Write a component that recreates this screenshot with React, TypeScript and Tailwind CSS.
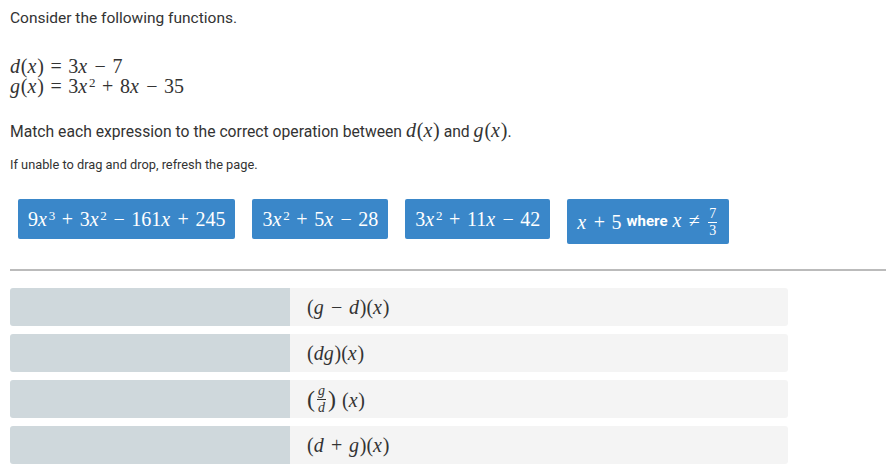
import React from 'react';

const ui = { fontFamily: 'Roboto, "Liberation Sans", sans-serif' };
const mathFont = { fontFamily: '"Liberation Serif", "DejaVu Serif", serif' };

// italic variable
function V({ children }: { children: React.ReactNode }) {
  return <span className="italic pr-[0.04em]">{children}</span>;
}

function Op({ children }: { children: React.ReactNode }) {
  return <span className="mx-[0.33em]">{children}</span>;
}

function Sup({ children }: { children: React.ReactNode }) {
  return <span className="relative -top-[0.5em] text-[0.65em] leading-none ml-[1px]">{children}</span>;
}

function M({ children, className = '' }: { children: React.ReactNode; className?: string }) {
  return (
    <span style={mathFont} className={`whitespace-nowrap ${className}`}>
      {children}
    </span>
  );
}

function Frac({ n, d, italic }: { n: string; d: string; italic?: boolean }) {
  return (
    <span className={`inline-flex flex-col items-center align-middle text-[0.7em] leading-none mx-[2px] ${italic ? 'italic' : ''}`}>
      <span className="px-[1px] pb-[1px]">{n}</span>
      <span className="border-t border-current w-full text-center pt-[1px]">{d}</span>
    </span>
  );
}

const rows: React.ReactNode[] = [
  <M><span>(</span><V>g</V><Op>−</Op><V>d</V><span>)(</span><V>x</V><span>)</span></M>,
  <M><span>(</span><V>dg</V><span>)(</span><V>x</V><span>)</span></M>,
  <M>
    <span className="inline-flex items-center">
      <span className="text-[1.2em] font-light">(</span>
      <Frac n="g" d="d" italic />
      <span className="text-[1.2em] font-light">)</span>
    </span>
    <span className="ml-[6px]">(</span><V>x</V><span>)</span>
  </M>,
  <M><span>(</span><V>d</V><Op>+</Op><V>g</V><span>)(</span><V>x</V><span>)</span></M>,
];

export default function App() {
  return (
    <div className="w-[896px] h-[471px] bg-white text-[#333] px-[10px] pt-[8px]" style={ui}>
      <p className="text-[15.5px] leading-[20px]">Consider the following functions.</p>

      <div className="mt-[28px] text-[20px] leading-[20px]">
        <div>
          <M><V>d</V>(<V>x</V>)<Op>=</Op>3<V>x</V><Op>−</Op>7</M>
        </div>
        <div>
          <M><V>g</V>(<V>x</V>)<Op>=</Op>3<V>x</V><Sup>2</Sup><Op>+</Op>8<V>x</V><Op>−</Op>35</M>
        </div>
      </div>

      <p className="mt-[24px] text-[15.7px] leading-[20px]">
        Match each expression to the correct operation between{' '}
        <M className="text-[20px]"><V>d</V>(<V>x</V>)</M> and{' '}
        <M className="text-[20px]"><V>g</V>(<V>x</V>)</M>.
      </p>

      <p className="mt-[15px] text-[12.8px] leading-[16px]">If unable to drag and drop, refresh the page.</p>

      <div className="flex items-start gap-[17px] mt-[26px] ml-[8px]">
        <div className="h-[40px] px-[10px] flex items-center bg-[#3a87c9] rounded-[2px] text-white text-[20px]">
          <M>9<V>x</V><Sup>3</Sup><Op>+</Op>3<V>x</V><Sup>2</Sup><Op>−</Op>161<V>x</V><Op>+</Op>245</M>
        </div>
        <div className="h-[40px] px-[10px] flex items-center bg-[#3a87c9] rounded-[2px] text-white text-[20px]">
          <M>3<V>x</V><Sup>2</Sup><Op>+</Op>5<V>x</V><Op>−</Op>28</M>
        </div>
        <div className="h-[40px] px-[10px] flex items-center bg-[#3a87c9] rounded-[2px] text-white text-[20px]">
          <M>3<V>x</V><Sup>2</Sup><Op>+</Op>11<V>x</V><Op>−</Op>42</M>
        </div>
        <div className="h-[45px] px-[10px] flex items-center bg-[#3a87c9] rounded-[2px] text-white text-[20px]">
          <M><V>x</V><Op>+</Op>5</M>
          <span style={ui} className="font-bold text-[15px] mx-[5px]">where</span>
          <M><V>x</V><Op>≠</Op><Frac n="7" d="3" /></M>
        </div>
      </div>

      <div className="mt-[25px] h-[2px] bg-[#bbbbbb] w-[876px]" />

      <div className="mt-[17px] flex flex-col gap-[8px] w-[778px]">
        {rows.map((r, i) => (
          <div key={i} className="flex h-[38px] rounded-[3px] overflow-hidden">
            <div className="w-[280px] bg-[#cfd8dc]" />
            <div className="flex-1 bg-[#f4f4f4] flex items-center pl-[17px] text-[20px] text-[#333]">{r}</div>
          </div>
        ))}
      </div>
    </div>
  );
}
